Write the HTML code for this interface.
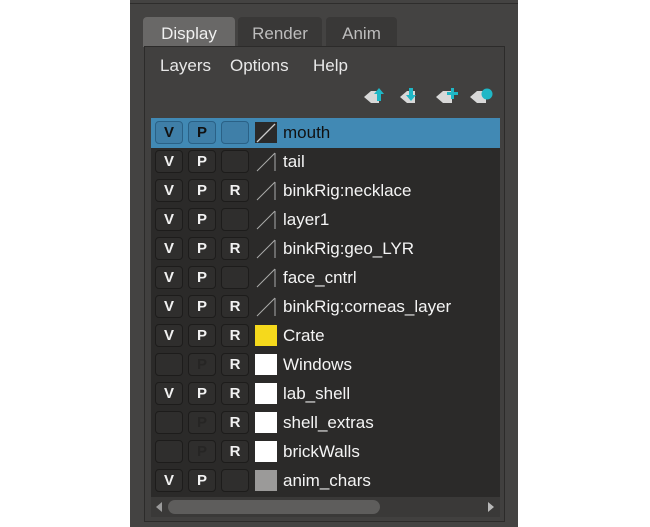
<!DOCTYPE html><html><head><style>
body{margin:0;width:650px;height:527px;background:#fff;position:relative;overflow:hidden;font-family:"Liberation Sans","DejaVu Sans",sans-serif}
.a{position:absolute}
#outer{left:130px;top:0;width:388px;height:527px;background:#444342}
.tab{position:absolute;top:17px;height:30px;border-radius:4px 4px 0 0;color:#bdbdbd;font-size:17px;line-height:34px;text-align:center}
#frame{left:144px;top:46px;width:359px;height:474px;background:#41403f;border:1px solid #2c2b2a}
.menu{position:absolute;top:56px;color:#e8e8e8;font-size:17px}
#list{left:151px;top:118px;width:349px;height:379px;background:#2b2a29}
.row{position:absolute;left:0;width:349px;height:29px}
.b{position:absolute;top:3px;width:26px;height:21px;border:1px solid #1d1c1b;border-radius:4px;background:#2f2e2d;color:#f2f2f2;font-size:15px;font-weight:bold;text-align:center;line-height:22px}
.sw{position:absolute;left:104px;top:4px;width:22px;height:21px}
.t{position:absolute;left:132px;top:5px;color:#f4f4f4;font-size:17px}
</style></head><body>
<div class="a" id="outer"></div>
<div class="a" style="left:130px;top:3px;width:388px;height:1px;background:#2e2d2c"></div>
<div class="tab" style="left:143px;width:92px;background:#696867;color:#f0f0f0">Display</div>
<div class="tab" style="left:238px;width:84px;background:#393837">Render</div>
<div class="tab" style="left:326px;width:71px;background:#393837">Anim</div>
<div class="a" id="frame"></div>
<div class="menu" style="left:160px">Layers</div>
<div class="menu" style="left:230px">Options</div>
<div class="menu" style="left:313px">Help</div>
<svg class="a" style="left:360px;top:85px" width="135" height="22">
<g fill="#d8d8d8"><path d="M4 12l7-6h8v12h-8z"/><path d="M40 12l7-6h8v12h-8z"/><path d="M76 12l7-6h9v12h-9z"/><path d="M110 12l7-6h9v12h-9z"/></g>
<g fill="#1fb7c6"><path d="M14 9l5-6 5 6h-3v7h-4v-7z"/><path d="M49 3h4v7h3l-5 6-5-6h3z"/><path d="M91 3h3v4h4v3h-4v4h-3v-4h-4v-3h4z"/><circle cx="127" cy="9" r="5.5"/></g>
</svg>
<div class="a" id="list">
<div class="row" style="top:0;background:#4189b4;height:30px"></div>
</div>
<div class="a" style="left:151px;top:497px;width:349px;height:20px;background:#3a3938"></div>
<div class="a" style="left:168px;top:500px;width:212px;height:14px;border-radius:7px;background:#5e5d5c"></div>
<svg class="a" style="left:153px;top:500px" width="345" height="14"><path d="M3 7l6-5v10z" fill="#9a9a9a"/><path d="M341 7l-6-5v10z" fill="#b8b8b8"/></svg>
<div class="a" style="left:151px;top:118px;width:349px;height:379px">
<div class="row" style="top:0"><div class="b" style="left:4px;background:#3f7fa8;border-color:#2a6186;color:#111">V</div><div class="b" style="left:37px;background:#3f7fa8;border-color:#2a6186;color:#111">P</div><div class="b" style="left:70px;background:#3f7fa8;border-color:#2a6186"></div><svg class="sw" viewBox="0 0 22 21"><rect width="22" height="21" fill="#2a2a2a"/><path d="M2 20L20 2" stroke="#ccc" stroke-width="1.3"/></svg><div class="t" style="color:#111">mouth</div></div>
<div class="row" style="top:29px"><div class="b" style="left:4px">V</div><div class="b" style="left:37px">P</div><div class="b" style="left:70px"></div><svg class="sw" viewBox="0 0 22 21"><path d="M2 20L20 2M20 2v18" stroke="#aaa" stroke-width="1"/></svg><div class="t">tail</div></div>
<div class="row" style="top:58px"><div class="b" style="left:4px">V</div><div class="b" style="left:37px">P</div><div class="b" style="left:70px">R</div><svg class="sw" viewBox="0 0 22 21"><path d="M2 20L20 2M20 2v18" stroke="#aaa" stroke-width="1"/></svg><div class="t">binkRig:necklace</div></div>
<div class="row" style="top:87px"><div class="b" style="left:4px">V</div><div class="b" style="left:37px">P</div><div class="b" style="left:70px"></div><svg class="sw" viewBox="0 0 22 21"><path d="M2 20L20 2M20 2v18" stroke="#aaa" stroke-width="1"/></svg><div class="t">layer1</div></div>
<div class="row" style="top:116px"><div class="b" style="left:4px">V</div><div class="b" style="left:37px">P</div><div class="b" style="left:70px">R</div><svg class="sw" viewBox="0 0 22 21"><path d="M2 20L20 2M20 2v18" stroke="#aaa" stroke-width="1"/></svg><div class="t">binkRig:geo_LYR</div></div>
<div class="row" style="top:145px"><div class="b" style="left:4px">V</div><div class="b" style="left:37px">P</div><div class="b" style="left:70px"></div><svg class="sw" viewBox="0 0 22 21"><path d="M2 20L20 2M20 2v18" stroke="#aaa" stroke-width="1"/></svg><div class="t">face_cntrl</div></div>
<div class="row" style="top:174px"><div class="b" style="left:4px">V</div><div class="b" style="left:37px">P</div><div class="b" style="left:70px">R</div><svg class="sw" viewBox="0 0 22 21"><path d="M2 20L20 2M20 2v18" stroke="#aaa" stroke-width="1"/></svg><div class="t">binkRig:corneas_layer</div></div>
<div class="row" style="top:203px"><div class="b" style="left:4px">V</div><div class="b" style="left:37px">P</div><div class="b" style="left:70px">R</div><div class="sw" style="background:#f5d91c"></div><div class="t">Crate</div></div>
<div class="row" style="top:232px"><div class="b" style="left:4px"></div><div class="b" style="left:37px;color:#262524">P</div><div class="b" style="left:70px">R</div><div class="sw" style="background:#fff"></div><div class="t">Windows</div></div>
<div class="row" style="top:261px"><div class="b" style="left:4px">V</div><div class="b" style="left:37px">P</div><div class="b" style="left:70px">R</div><div class="sw" style="background:#fff"></div><div class="t">lab_shell</div></div>
<div class="row" style="top:290px"><div class="b" style="left:4px"></div><div class="b" style="left:37px;color:#262524">P</div><div class="b" style="left:70px">R</div><div class="sw" style="background:#fff"></div><div class="t">shell_extras</div></div>
<div class="row" style="top:319px"><div class="b" style="left:4px"></div><div class="b" style="left:37px;color:#262524">P</div><div class="b" style="left:70px">R</div><div class="sw" style="background:#fff"></div><div class="t">brickWalls</div></div>
<div class="row" style="top:348px"><div class="b" style="left:4px">V</div><div class="b" style="left:37px">P</div><div class="b" style="left:70px"></div><div class="sw" style="background:#9b9a99"></div><div class="t">anim_chars</div></div>
</div>
</body></html>
